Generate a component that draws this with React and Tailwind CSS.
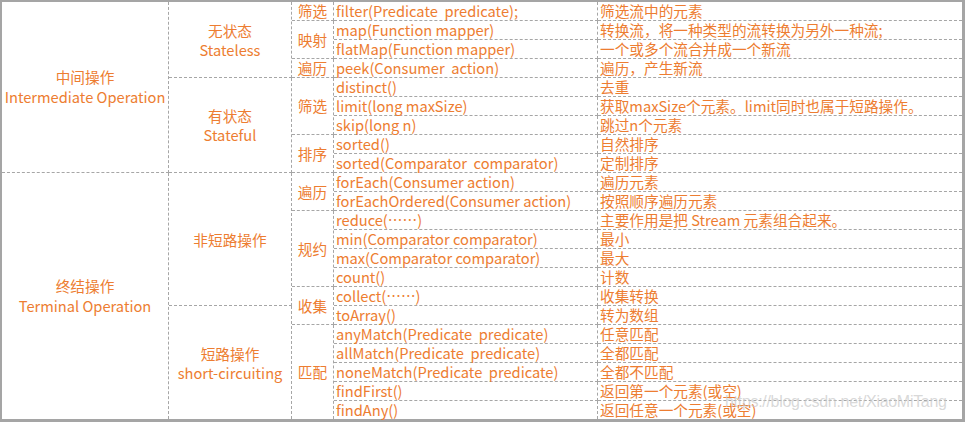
import React from "react";

// every cell carries its own grid placement, written out so Tailwind picks it up
const ops = [
  { zh: "中间操作", en: "Intermediate Operation", area: "row-start-1 row-span-9 border-b" },
  { zh: "终结操作", en: "Terminal Operation", area: "row-start-10 row-span-13" },
];

const kinds = [
  { zh: "无状态", en: "Stateless", area: "row-start-1 row-span-4 border-b" },
  { zh: "有状态", en: "Stateful", area: "row-start-5 row-span-5 border-b" },
  { zh: "非短路操作", en: "", area: "row-start-10 row-span-7 border-b" },
  { zh: "短路操作", en: "short-circuiting", area: "row-start-17 row-span-6" },
];

const groups = [
  { name: "筛选", area: "row-start-1 row-span-1 border-b" },
  { name: "映射", area: "row-start-2 row-span-2 border-b" },
  { name: "遍历", area: "row-start-4 row-span-1 border-b" },
  { name: "筛选", area: "row-start-5 row-span-3 border-b" },
  { name: "排序", area: "row-start-8 row-span-2 border-b" },
  { name: "遍历", area: "row-start-10 row-span-2 border-b" },
  { name: "规约", area: "row-start-12 row-span-4 border-b" },
  { name: "收集", area: "row-start-16 row-span-2 border-b" },
  { name: "匹配", area: "row-start-18 row-span-5" },
];

const rows = [
  ["filter(Predicate  predicate);", "筛选流中的元素"],
  ["map(Function mapper)", "转换流，将一种类型的流转换为另外一种流;"],
  ["flatMap(Function mapper)", "一个或多个流合并成一个新流"],
  ["peek(Consumer  action)", "遍历，产生新流"],
  ["distinct()", "去重"],
  ["limit(long maxSize)", "获取maxSize个元素。limit同时也属于短路操作。"],
  ["skip(long n)", "跳过n个元素"],
  ["sorted()", "自然排序"],
  ["sorted(Comparator  comparator)", "定制排序"],
  ["forEach(Consumer action)", "遍历元素"],
  ["forEachOrdered(Consumer action)", "按照顺序遍历元素"],
  ["reduce(……)", "主要作用是把 Stream 元素组合起来。"],
  ["min(Comparator comparator)", "最小"],
  ["max(Comparator comparator)", "最大"],
  ["count()", "计数"],
  ["collect(……)", "收集转换"],
  ["toArray()", "转为数组"],
  ["anyMatch(Predicate  predicate)", "任意匹配"],
  ["allMatch(Predicate  predicate)", "全都匹配"],
  ["noneMatch(Predicate  predicate)", "全都不匹配"],
  ["findFirst()", "返回第一个元素(或空)"],
  ["findAny()", "返回任意一个元素(或空)"],
];

const line = "border-dashed border-[#a6a6a6]";

const App = () => {
  return (
    <div
      lang="zh-CN"
      className="relative w-[965px] h-[422px] bg-white text-[#ED7D31] text-[14.67px] font-['Noto_Sans_CJK_SC','Noto_Sans',sans-serif]"
    >
      <div className="h-[422px] border-t-2 border-l-2 border-r-[3px] border-b-[3px] border-[#a5a5a5]">
        <div className="grid grid-flow-row grid-cols-[167px_123px_42px_264px_364px] grid-rows-[repeat(21,19px)_18px]">
          {ops.map((op) => (
            <div
              key={op.en}
              className={`col-start-1 ${op.area} flex flex-col items-center justify-center leading-[20px] border-r ${line}`}
            >
              <span>{op.zh}</span>
              <span>{op.en}</span>
            </div>
          ))}
          {kinds.map((k) => (
            <div
              key={k.zh}
              className={`col-start-2 ${k.area} flex flex-col items-center justify-center leading-[19px] border-r ${line}`}
            >
              <span>{k.zh}</span>
              {k.en && <span>{k.en}</span>}
            </div>
          ))}
          {groups.map((g) => (
            <div
              key={g.area}
              className={`col-start-3 ${g.area} flex items-center justify-center leading-[18px] border-r ${line}`}
            >
              {g.name}
            </div>
          ))}
          {rows.map(([method, desc], i) => (
            <React.Fragment key={i}>
              <div
                className={`col-start-4 flex items-center pl-[2px] leading-[18px] whitespace-pre border-r ${line} ${i === 21 ? "" : "border-b"}`}
              >
                {method}
              </div>
              <div
                className={`col-start-5 flex items-center pl-[2px] leading-[18px] whitespace-pre ${line} ${i === 21 ? "" : "border-b"}`}
              >
                {desc}
              </div>
            </React.Fragment>
          ))}
        </div>
      </div>
      <div className="absolute left-[725px] top-[390px] text-[16px] tracking-[-0.3px] text-[#c8c8c8]/70 whitespace-nowrap font-['Liberation_Sans',sans-serif] pointer-events-none">
        https://blog.csdn.net/XiaoMiTang
      </div>
    </div>
  );
};

export default App;
